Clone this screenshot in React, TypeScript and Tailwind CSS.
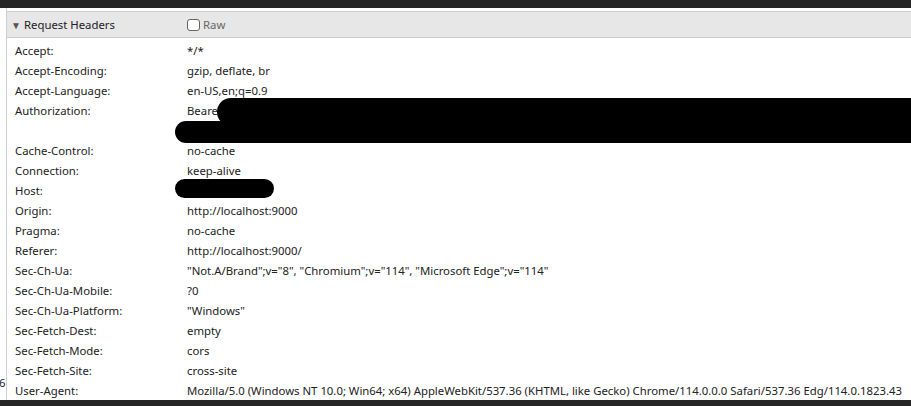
const rows: [string, string][] = [
  ["Accept:", "*/*"],
  ["Accept-Encoding:", "gzip, deflate, br"],
  ["Accept-Language:", "en-US,en;q=0.9"],
  ["Authorization:", "Bearer"],
  ["", ""],
  ["Cache-Control:", "no-cache"],
  ["Connection:", "keep-alive"],
  ["Host:", ""],
  ["Origin:", "http://localhost:9000"],
  ["Pragma:", "no-cache"],
  ["Referer:", "http://localhost:9000/"],
  ["Sec-Ch-Ua:", '"Not.A/Brand";v="8", "Chromium";v="114", "Microsoft Edge";v="114"'],
  ["Sec-Ch-Ua-Mobile:", "?0"],
  ["Sec-Ch-Ua-Platform:", '"Windows"'],
  ["Sec-Fetch-Dest:", "empty"],
  ["Sec-Fetch-Mode:", "cors"],
  ["Sec-Fetch-Site:", "cross-site"],
  [
    "User-Agent:",
    "Mozilla/5.0 (Windows NT 10.0; Win64; x64) AppleWebKit/537.36 (KHTML, like Gecko) Chrome/114.0.0.0 Safari/537.36 Edg/114.0.1823.43",
  ],
];

export default function App() {
  return (
    <div
      className="relative flex h-[406px] w-[911px] flex-col overflow-hidden bg-white text-[11.35px] text-[#222]"
      style={{ fontFamily: '"Noto Sans", "Open Sans", sans-serif' }}
    >
      <div className="h-[8px] shrink-0 bg-[#262626]" />
      <div className="flex min-h-0 flex-1 overflow-hidden">
        <div className="flex w-[6px] shrink-0 flex-col justify-end overflow-hidden pb-[7px] leading-[20px]">
          <span className="-ml-[1px]">6</span>
        </div>
        <div className="flex min-w-0 flex-1 flex-col border-l border-[#cfcfcf] pt-[3px]">
          <div className="flex h-[27px] shrink-0 items-center border-y border-[#cccccc] bg-[#e7e7e7] pt-[1px]">
            <span className="ml-[4px] w-[13px] text-[10px] text-[#555]">▼</span>
            <span className="w-[163px]">Request Headers</span>
            <span className="mr-[3px] h-[12px] w-[13px] rounded-[3px] border border-[#666] bg-white" />
            <span className="text-[#666]">Raw</span>
          </div>
          <div className="flex flex-col pt-[2px]">
            {rows.map(([k, v], i) => (
              <div key={i} className="flex h-[20px] shrink-0 items-center whitespace-nowrap pt-[2px]">
                <span className="ml-[8px] w-[172px] shrink-0">{k}</span>
                <span>{v}</span>
              </div>
            ))}
          </div>
        </div>
      </div>
      <div className="h-[6px] shrink-0 bg-[#262626]" />
      <div className="absolute left-[217px] top-[98px] h-[28px] w-[720px] rounded-l-[14px] bg-black" />
      <div className="absolute left-[175px] top-[121px] h-[22px] w-[760px] rounded-l-[11px] bg-black" />
      <div className="absolute left-[175px] top-[179px] h-[19px] w-[99px] rounded-full bg-black" />
    </div>
  );
}
